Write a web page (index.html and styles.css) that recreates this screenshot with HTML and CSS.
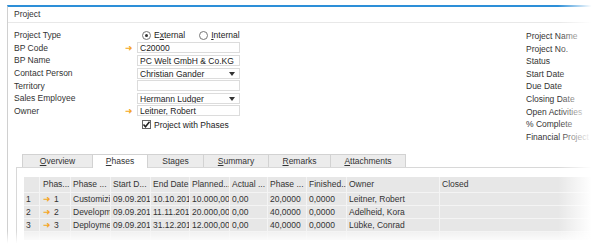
FILE: index.html
```html
<!DOCTYPE html>
<html>
<head>
<meta charset="utf-8">
<link rel="stylesheet" href="styles.css">
</head>
<body>
<div class="window">
  <div class="title">Project</div>
  <div class="form">
    <div class="left">
      <div class="row"><span class="lbl">Project Type</span><span class="arr"></span>
        <span class="radios"><span class="radio on"></span><span>E<u>x</u>ternal</span><span class="radio"></span><span><u>I</u>nternal</span></span></div>
      <div class="row"><span class="lbl">BP Code</span><span class="arr">&#10140;</span><span class="field">C20000</span></div>
      <div class="row"><span class="lbl">BP Name</span><span class="arr"></span><span class="field">PC Welt GmbH &amp; Co.KG</span></div>
      <div class="row"><span class="lbl">Contact Person</span><span class="arr"></span><span class="field dd">Christian Gander<span class="tri"></span></span></div>
      <div class="row"><span class="lbl">Territory</span><span class="arr"></span><span class="field"></span></div>
      <div class="row"><span class="lbl">Sales Employee</span><span class="arr"></span><span class="field dd">Hermann Ludger<span class="tri"></span></span></div>
      <div class="row"><span class="lbl">Owner</span><span class="arr">&#10140;</span><span class="field">Leitner, Robert</span></div>
      <div class="row"><span class="lbl"></span><span class="arr"></span><span class="check"><span class="box"><svg width="9" height="9" viewBox="0 0 9 9"><path d="M1.5 4.5 L3.5 6.8 L7.5 1.8" fill="none" stroke="#222" stroke-width="1.5"/></svg></span>Project with Phases</span></div>
    </div>
    <div class="right">
      <div class="rrow">Project Name</div>
      <div class="rrow">Project No.</div>
      <div class="rrow">Status</div>
      <div class="rrow">Start Date</div>
      <div class="rrow">Due Date</div>
      <div class="rrow">Closing Date</div>
      <div class="rrow">Open Activities</div>
      <div class="rrow">% Complete</div>
      <div class="rrow">Financial Project</div>
    </div>
  </div>
  <div class="tabs">
    <span class="tab t1"><u>O</u>verview</span>
    <span class="tab t2 active"><u>P</u>hases</span>
    <span class="tab t3">Stages</span>
    <span class="tab t4"><u>S</u>ummary</span>
    <span class="tab t5"><u>R</u>emarks</span>
    <span class="tab t6"><u>A</u>ttachments</span>
  </div>
  <div class="panel">
    <div class="grid">
      <div class="gr head">
        <span class="c c0"></span><span class="c c1">Phas...</span><span class="c c2">Phase ...</span><span class="c c3">Start D...</span><span class="c c4">End Date</span><span class="c c5">Planned...</span><span class="c c6">Actual ...</span><span class="c c7">Phase ...</span><span class="c c8">Finished...</span><span class="c c9">Owner</span><span class="c c10">Closed</span>
      </div>
      <div class="gr">
        <span class="c c0">1</span><span class="c c1"><span class="garr">&#10140;</span>1</span><span class="c c2">Customizin</span><span class="c c3">09.09.201</span><span class="c c4">10.10.201</span><span class="c c5">10.000,00</span><span class="c c6">0,00</span><span class="c c7">20,0000</span><span class="c c8">0,0000</span><span class="c c9">Leitner, Robert</span><span class="c c10"></span>
      </div>
      <div class="gr">
        <span class="c c0">2</span><span class="c c1"><span class="garr">&#10140;</span>2</span><span class="c c2">Developm</span><span class="c c3">09.09.201</span><span class="c c4">11.11.201</span><span class="c c5">20.000,00</span><span class="c c6">0,00</span><span class="c c7">40,0000</span><span class="c c8">0,0000</span><span class="c c9">Adelheid, Kora</span><span class="c c10"></span>
      </div>
      <div class="gr">
        <span class="c c0">3</span><span class="c c1"><span class="garr">&#10140;</span>3</span><span class="c c2">Deploymer</span><span class="c c3">09.09.201</span><span class="c c4">31.12.201</span><span class="c c5">12.000,00</span><span class="c c6">0,00</span><span class="c c7">40,0000</span><span class="c c8">0,0000</span><span class="c c9">Lübke, Conrad</span><span class="c c10"></span>
      </div>
      <div class="gr empty">
        <span class="c c0"></span><span class="c c1"></span><span class="c c2"></span><span class="c c3"></span><span class="c c4"></span><span class="c c5"></span><span class="c c6"></span><span class="c c7"></span><span class="c c8"></span><span class="c c9"></span><span class="c c10"></span>
      </div>
    </div>
  </div>
</div>
<div class="fade-right"></div>
<div class="fade-bottom"></div>
</body>
</html>
```
FILE: styles.css
```css
* { box-sizing: border-box; }
html, body { margin: 0; padding: 0; background: #fff; }
body {
  width: 600px; height: 249px; overflow: hidden; position: relative;
  font-family: "Liberation Sans", Arial, sans-serif; font-size: 8.5px; color: #333;
}
u { text-decoration: underline; }
.window {
  margin: 5px 0 0 7px; width: 590px; height: 240px;
  border-top: 2px solid #2d8fd8;
  border-left: 1px solid #d0d0d0;
}
.title {
  height: 16px; line-height: 15px; padding-left: 6px;
  border-bottom: 1px solid #e8e8e8; color: #333;
}
.form { display: flex; padding-top: 6px; padding-left: 6px; }
.left { width: 300px; }
.row { display: flex; align-items: center; height: 12.6px; }
.lbl { width: 111px; white-space: nowrap; }
.arr { width: 12px; color: #f5a623; font-size: 9px; line-height: 10px; }
.field {
  position: relative; width: 103px; height: 11px; line-height: 10px;
  border: 1px solid #dcdcdc; padding-left: 2px; color: #222; white-space: nowrap; overflow: hidden;
  background: #fff;
}
.tri {
  position: absolute; right: 4px; top: 3px; width: 0; height: 0;
  border-left: 3px solid transparent; border-right: 3px solid transparent; border-top: 4px solid #333;
}
.radios { display: flex; align-items: center; padding-left: 5px; color: #222; }
.radio {
  width: 9px; height: 9px; border-radius: 50%; border: 1px solid #777; margin-right: 3px;
  position: relative; background: #fff;
}
.radio.on::after {
  content: ""; position: absolute; left: 2px; top: 2px; width: 3px; height: 3px; border-radius: 50%; background: #333;
}
.radios span:nth-child(2) { margin-right: 14px; }
.check { display: flex; align-items: center; padding-left: 5px; color: #222; margin-top: 3px; }
.box {
  width: 9px; height: 9px; border: 1px solid #666; margin-right: 3px; display: flex; align-items: center; justify-content: center; background: #fff;
}
.box svg { display: block; margin: -1px; }
.right { margin-left: 212px; padding-top: 1px; }
.rrow { height: 12.6px; line-height: 12px; white-space: nowrap; color: #333; }
.tabs { display: flex; margin-top: 11px; margin-left: 14px; height: 13px; position: relative; z-index: 1; }
.tab {
  height: 13px; line-height: 12px; text-align: center; background: #ececec;
  border: 1px solid #d2d2d2; border-bottom: none; margin-right: -1px; color: #333;
}
.tab.active { background: #fff; height: 14px; }
.t1 { width: 71px; } .t2 { width: 56px; } .t3 { width: 57px; } .t4 { width: 66px; } .t5 { width: 63px; } .t6 { width: 76px; }
.panel {
  margin-left: 8px; border-top: 1px solid #d8d8d8; border-left: 1px solid #d8d8d8;
  padding: 9px 0 0 7px; height: 80px;
}
.grid { width: 600px; }
.gr { display: flex; height: 13px; }
.gr.head { height: 16px; }
.c {
  background: #e7e7e7; border-right: 1px solid #f4f4f4; border-bottom: 1px solid #f4f4f4;
  white-space: nowrap; overflow: hidden; padding-left: 2px; line-height: 12px; color: #333;
}
.head .c { line-height: 15px; }
.gr.empty { height: 8px; }
.gr.empty .c { background: #f0f0f0; border-bottom: none; }
.c0 { width: 16px; padding-left: 2px; }
.c1 { width: 31px; padding-left: 3px; }
.c2 { width: 40px; }
.c3 { width: 40px; }
.c4 { width: 39px; }
.c5 { width: 40px; }
.c6 { width: 38px; }
.c7 { width: 39px; }
.c8 { width: 40px; }
.c9 { width: 93px; }
.c10 { width: 160px; }
.garr { color: #f5a623; margin-right: 3px; font-size: 9px; }
.fade-right {
  position: absolute; top: 0; right: 0; width: 42px; height: 249px;
  background: linear-gradient(to right, rgba(255,255,255,0), #fff 80%);
}
.fade-bottom {
  position: absolute; left: 0; bottom: 0; width: 600px; height: 18px;
  background: linear-gradient(to bottom, rgba(255,255,255,0), #fff 70%);
}
```
